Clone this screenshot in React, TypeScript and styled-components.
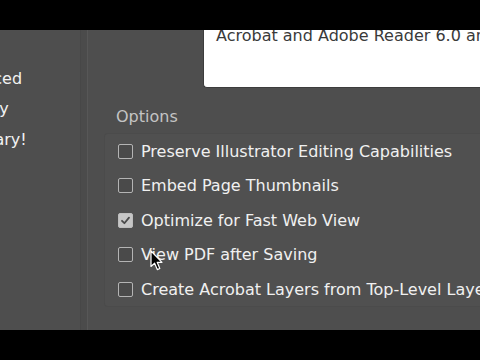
import styled, { createGlobalStyle } from "styled-components";

const GlobalStyle = createGlobalStyle`
  html, body {
    margin: 0;
    padding: 0;
    background: #000;
  }
  body {
    font-family: "DejaVu Sans", "Liberation Sans", sans-serif;
  }
`;

const options = [
  { label: "Preserve Illustrator Editing Capabilities", checked: false },
  { label: "Embed Page Thumbnails", checked: false },
  { label: "Optimize for Fast Web View", checked: true },
  { label: "View PDF after Saving", checked: false },
  { label: "Create Acrobat Layers from Top-Level Layers", checked: false },
];

const sections = ["Output", "Advanced", "Security", "Summary!"];

const CheckMark = () => (
  <svg width="11" height="11" viewBox="0 0 11 11">
    <path
      d="M2 5.8 L4.4 8.2 L9 2.6"
      fill="none"
      stroke="#4a4a4a"
      strokeWidth="1.8"
      strokeLinecap="round"
      strokeLinejoin="round"
    />
  </svg>
);

const Cursor = () => (
  <CursorBox>
    <svg width="14" height="22" viewBox="0 0 14 22">
      <path
        d="M1 1 L1 16.5 L4.6 13.2 L7.3 19.6 L9.8 18.5 L7.2 12.3 L12 12.3 Z"
        fill="#000"
        stroke="#fff"
        strokeWidth="1.2"
        strokeLinejoin="round"
      />
    </svg>
  </CursorBox>
);

const App = () => {
  return (
    <>
      <GlobalStyle />
      <Frame>
        <Letterbox />
        <Stage>
          <Sidebar>
            <SectionList>
              {sections.map((s) => (
                <SectionItem key={s}>{s}</SectionItem>
              ))}
            </SectionList>
          </Sidebar>
          <Divider />
          <Main>
            <DescBox>
              <DescText>Acrobat and Adobe Reader 6.0 and later.</DescText>
            </DescBox>
            <GroupLabel>Options</GroupLabel>
            <Group>
              {options.map((o) => (
                <Row key={o.label}>
                  <Box $checked={o.checked}>{o.checked && <CheckMark />}</Box>
                  <RowLabel>{o.label}</RowLabel>
                </Row>
              ))}
            </Group>
          </Main>
          <Cursor />
        </Stage>
        <Letterbox />
      </Frame>
    </>
  );
};

export default App;

const Frame = styled.div`
  width: 480px;
  height: 360px;
  display: flex;
  flex-direction: column;
  overflow: hidden;
`;
const Letterbox = styled.div`
  height: 30px;
  background: #000;
  flex-shrink: 0;
  position: relative;
  z-index: 2;
`;
const Stage = styled.div`
  position: relative;
  height: 300px;
  background: #4e4e4e;
  display: flex;
  overflow: hidden;
`;
const Sidebar = styled.div`
  width: 80px;
  flex-shrink: 0;
  overflow: hidden;
`;
const SectionList = styled.div`
  margin-left: -57px;
  padding-top: 8px;
  display: flex;
  flex-direction: column;
  gap: 10.5px;
`;
const SectionItem = styled.div`
  color: #f2f2f2;
  font-size: 16px;
  line-height: 20px;
  white-space: nowrap;
`;
const Divider = styled.div`
  width: 6px;
  flex-shrink: 0;
  border-left: 1px solid #474747;
  border-right: 1px solid #575757;
  background: #4b4b4b;
`;
const Main = styled.div`
  flex: 1;
  display: flex;
  flex-direction: column;
  padding-left: 16px;
`;
const DescBox = styled.div`
  margin-left: 99px;
  margin-top: -10px;
  height: 61px;
  background: #fff;
  border: 1px solid #3c3c3c;
  border-right: none;
  border-radius: 4px 0 0 4px;
  padding: 5px 0 0 12px;
  overflow: hidden;
`;
const DescText = styled.div`
  color: #3a3a3a;
  font-size: 16px;
  white-space: nowrap;
`;
const GroupLabel = styled.div`
  color: #c4c4c4;
  font-size: 16px;
  margin: 19px 0 0 12px;
  line-height: 20px;
`;
const Group = styled.div`
  margin-top: 6px;
  background: #505050;
  border: 1px solid #4b4b4b;
  border-right: none;
  border-radius: 4px 0 0 4px;
  padding: 7px 0 7px 13px;
  display: flex;
  flex-direction: column;
  gap: 14.5px;
`;
const Row = styled.div`
  display: flex;
  align-items: center;
  gap: 8px;
  height: 20px;
  white-space: nowrap;
`;
const Box = styled.div<{ $checked: boolean }>`
  width: 13px;
  height: 13px;
  flex-shrink: 0;
  border-radius: 2px;
  border: 1px solid ${(p) => (p.$checked ? "#bdbdbd" : "#b4b4b4")};
  background: ${(p) => (p.$checked ? "#c6c6c6" : "#4a4a4a")};
  display: flex;
  align-items: center;
  justify-content: center;
`;
const RowLabel = styled.div`
  color: #f0f0f0;
  font-size: 16px;
`;
const CursorBox = styled.div`
  position: absolute;
  left: 150px;
  top: 220px;
  line-height: 0;
`;
